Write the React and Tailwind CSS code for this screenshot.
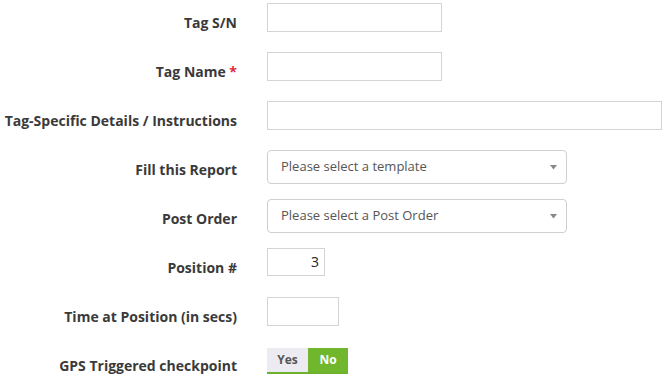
import React from "react";

const font = { fontFamily: '"Open Sans", "Liberation Sans", sans-serif' };

function Row({ label, required, children }) {
  return (
    <div className="flex h-[49px] items-start">
      <div className="w-[237px] shrink-0 text-right pt-[10px] text-[14px] leading-[20px] font-bold text-[#3a3a3a]">
        {label}
        {required && <span className="text-[#e0293a]"> *</span>}
      </div>
      <div className="ml-[30px]">{children}</div>
    </div>
  );
}

function Caret() {
  return (
    <svg width="7" height="5" viewBox="0 0 7 5" className="absolute right-[9px] top-[14px]">
      <path d="M0 0 H7 L3.5 4.5 Z" fill="#888" />
    </svg>
  );
}

export default function App() {
  return (
    <div className="w-[665px] h-[378px] bg-white overflow-hidden pt-[3px]" style={font}>
      <Row label="Tag S/N">
        <div className="w-[175px] h-[29px] border border-[#d4d4d4] bg-white" />
      </Row>
      <Row label="Tag Name" required>
        <div className="w-[175px] h-[29px] border border-[#d4d4d4] bg-white" />
      </Row>
      <Row label="Tag-Specific Details / Instructions">
        <div className="w-[395px] h-[29px] border border-[#d4d4d4] bg-white" />
      </Row>
      <Row label="Fill this Report">
        <div className="relative w-[300px] h-[34px] border border-[#cfcfcf] rounded-[4px] bg-white pl-[13px] text-[13px] leading-[31px] text-[#555]">
          Please select a template
          <Caret />
        </div>
      </Row>
      <Row label="Post Order">
        <div className="relative w-[300px] h-[34px] border border-[#cfcfcf] rounded-[4px] bg-white pl-[13px] text-[13px] leading-[31px] text-[#555]">
          Please select a Post Order
          <Caret />
        </div>
      </Row>
      <Row label="Position #">
        <div className="w-[58px] h-[28px] border border-[#d4d4d4] bg-white text-right pr-[5px] text-[14px] leading-[26px] text-[#222]">
          3
        </div>
      </Row>
      <Row label="Time at Position (in secs)">
        <div className="w-[72px] h-[29px] border border-[#d4d4d4] bg-white" />
      </Row>
      <div className="flex items-start">
        <div className="w-[237px] shrink-0 text-right pt-[10px] text-[14px] leading-[20px] font-bold text-[#3a3a3a]">
          GPS Triggered checkpoint
        </div>
        <div className="ml-[30px] mt-[2px] flex h-[26px] border-b-[2px] border-[#6db22c] text-[12px] font-bold leading-[24px]">
          <div className="w-[41px] bg-[#ecebf2] text-[#555] text-center">Yes</div>
          <div className="w-[40px] bg-[#70b72e] text-white text-center">No</div>
        </div>
      </div>
    </div>
  );
}
